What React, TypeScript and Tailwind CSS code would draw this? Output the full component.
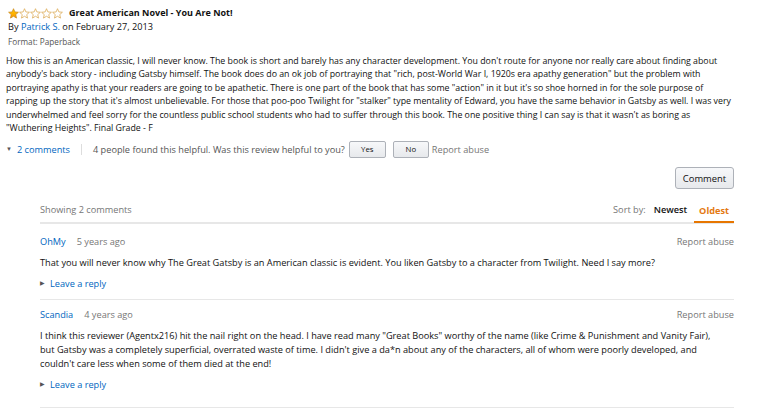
import React from "react";

function Star({ filled }: { filled: boolean }) {
  return (
    <svg width="11" height="11" viewBox="0 0 24 24">
      <defs>
        <linearGradient id="starFill" x1="0" y1="0" x2="0" y2="1">
          <stop offset="0%" stopColor="#ffce00" />
          <stop offset="100%" stopColor="#ff9a00" />
        </linearGradient>
      </defs>
      <polygon
        points="12,1.5 15,8.6 22.7,9.3 16.9,14.4 18.6,22 12,18 5.4,22 7.1,14.4 1.3,9.3 9,8.6"
        fill={filled ? "url(#starFill)" : "#ffffff"}
        stroke={filled ? "#c88719" : "#d9a54a"}
        strokeWidth="1.6"
        strokeLinejoin="round"
      />
    </svg>
  );
}

function Comment({
  author,
  age,
  text,
  last,
}: {
  author: string;
  age: string;
  text: string;
  last?: boolean;
}) {
  return (
    <div className={last ? "border-b border-[#e7e7e7] pb-[15px]" : "border-b border-[#e7e7e7] pb-[8px]"}>
      <div className="flex items-center justify-between h-[14px]">
        <div className="flex items-center gap-[11px]">
          <span className="text-[#0066c0]">{author}</span>
          <span className="text-[#767676]">{age}</span>
        </div>
        <span className="text-[#767676]">Report abuse</span>
      </div>
      <p className="mt-[7px] leading-[14px] max-w-[676px]">{text}</p>
      <div className="mt-[7px] flex items-center gap-[5px] h-[14px]">
        <span className="text-[6px] text-[#555]">▶</span>
        <span className="text-[#0066c0]">Leave a reply</span>
      </div>
    </div>
  );
}

export default function App() {
  return (
    <div className="w-[768px] h-[419px] overflow-hidden bg-white text-[#111] text-[9.2px] leading-[13.4px] font-['Open_Sans',Arial,sans-serif]">
      <div className="pl-[6px] pr-[34px] pt-[6px]">
        <div className="flex items-center gap-[6px] pl-[2px] h-[14px]">
          <div className="flex">
            <Star filled />
            <Star filled={false} />
            <Star filled={false} />
            <Star filled={false} />
            <Star filled={false} />
          </div>
          <span className="font-bold text-[9px]">Great American Novel - You Are Not!</span>
        </div>
        <div className="pl-[2px] h-[14px] flex items-center">
          By&nbsp;<span className="text-[#0066c0]">Patrick S.</span>&nbsp;on February 27, 2013
        </div>
        <div className="pl-[2px] h-[15px] flex items-center text-[8.2px] text-[#555]">
          Format: Paperback
        </div>
        <p className="mt-[6px] mr-[3px] text-[8.8px]">
          How this is an American classic, I will never know. The book is short and barely has any
          character development. You don't route for anyone nor really care about finding about
          anybody's back story - including Gatsby himself. The book does do an ok job of portraying
          that "rich, post-World War I, 1920s era apathy generation" but the problem with portraying
          apathy is that your readers are going to be apathetic. There is one part of the book that
          has some "action" in it but it's so shoe horned in for the sole purpose of rapping up the
          story that it's almost unbelievable. For those that poo-poo Twilight for "stalker" type
          mentality of Edward, you have the same behavior in Gatsby as well. I was very underwhelmed
          and feel sorry for the countless public school students who had to suffer through this
          book. The one positive thing I can say is that it wasn't as boring as "Wuthering Heights".
          Final Grade - F
        </p>

        <div className="mt-[5px] flex items-center h-[18px]">
          <span className="text-[6px] text-[#555] mr-[5px]">▼</span>
          <span className="text-[#0066c0]">2 comments</span>
          <span className="mx-[11px] w-px h-[11px] bg-[#ddd]" />
          <span className="text-[#555]">4 people found this helpful. Was this review helpful to you?</span>
          <button className="ml-[4px] w-[37px] h-[17px] rounded-[2px] border border-[#adb1b8] bg-gradient-to-b from-[#f7f8fa] to-[#e7e9ec] text-[7.8px]">
            Yes
          </button>
          <button className="ml-[7px] w-[36px] h-[17px] rounded-[2px] border border-[#adb1b8] bg-gradient-to-b from-[#f7f8fa] to-[#e7e9ec] text-[7.8px]">
            No
          </button>
          <span className="ml-[3px] text-[#767676]">Report abuse</span>
        </div>

        <div className="mt-[9px] flex justify-end">
          <button className="w-[59px] h-[22px] rounded-[3px] border border-[#adb1b8] bg-gradient-to-b from-[#f7f8fa] to-[#e7e9ec] text-[9.4px] text-[#111]">
            Comment
          </button>
        </div>

        <div className="ml-[34px] mt-[14px]">
          <div className="flex items-end justify-between border-b-2 border-[#e7e7e7]">
            <span className="text-[#767676] pb-[5px]">Showing 2 comments</span>
            <div className="flex items-center">
              <span className="text-[#767676] pb-[5px] mr-[8px]">Sort by:</span>
              <span className="font-semibold text-[#111] pb-[5px] mr-[7px]">Newest</span>
              <span className="font-bold text-[#e47911] px-[5px] pb-[3px] border-b-2 border-[#e77600] -mb-[2px]">
                Oldest
              </span>
            </div>
          </div>
          <div className="pt-[11px]">
            <Comment
              author="OhMy"
              age="5 years ago"
              text="That you will never know why The Great Gatsby is an American classic is evident. You liken Gatsby to a character from Twilight. Need I say more?"
            />
          </div>
          <div className="pt-[8px]">
            <Comment
              last
              author="Scandia"
              age="4 years ago"
              text={`I think this reviewer (Agentx216) hit the nail right on the head. I have read many "Great Books" worthy of the name (like Crime & Punishment and Vanity Fair), but Gatsby was a completely superficial, overrated waste of time. I didn't give a da*n about any of the characters, all of whom were poorly developed, and couldn't care less when some of them died at the end!`}
            />
          </div>
        </div>
      </div>
    </div>
  );
}
